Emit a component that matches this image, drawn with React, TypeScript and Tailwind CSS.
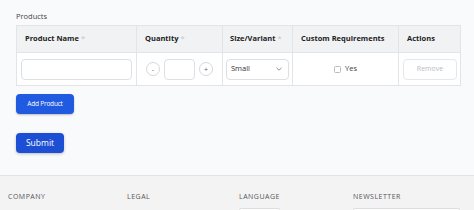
import React from "react";

export default function App() {
  const font = { fontFamily: '"Open Sans", "Noto Sans", sans-serif' };
  return (
    <div className="w-[474px] h-[210px] overflow-hidden bg-[#f9fafb]" style={font}>
      <div className="h-[176px] px-4 pt-[11px] border-b border-[#e3e3e3]">
        <div className="text-[7.5px] leading-[10px] text-[#444] mb-[4px]">Products</div>
        <table className="w-[444px] border-collapse text-[7.5px] table-fixed">
          <colgroup>
            <col className="w-[120px]" />
            <col className="w-[86px]" />
            <col className="w-[70px]" />
            <col className="w-[106px]" />
            <col className="w-[62px]" />
          </colgroup>
          <thead>
            <tr className="h-[27px] bg-[#f1f2f4]">
              <th className="border border-[#e2e4e8] text-left pl-2 font-bold text-[#222]">
                Product Name <span className="text-[#c4c4c4] font-normal">*</span>
              </th>
              <th className="border border-[#e2e4e8] text-left pl-2 font-bold text-[#222]">
                Quantity <span className="text-[#c4c4c4] font-normal">*</span>
              </th>
              <th className="border border-[#e2e4e8] text-left pl-[7px] font-bold text-[#222]">
                Size/Variant <span className="text-[#c4c4c4] font-normal">*</span>
              </th>
              <th className="border border-[#e2e4e8] text-left pl-2 font-bold text-[#222]">Custom Requirements</th>
              <th className="border border-[#e2e4e8] text-left pl-[8px] font-bold text-[#222]">Actions</th>
            </tr>
          </thead>
          <tbody>
            <tr className="h-[33px] bg-white">
              <td className="border border-[#e2e4e8] px-1">
                <div className="h-[21px] w-[111px] rounded-[4px] border border-[#dcdfe4] bg-white" />
              </td>
              <td className="border border-[#e2e4e8]">
                <div className="flex items-center pl-[9px] gap-[4px]">
                  <div className="w-[14px] h-[14px] rounded-full border border-[#d5d8dd] flex items-center justify-center text-[7px] text-[#666] leading-none">-</div>
                  <div className="w-[31px] h-[21px] rounded-[4px] border border-[#dcdfe4] bg-white" />
                  <div className="w-[14px] h-[14px] rounded-full border border-[#d5d8dd] flex items-center justify-center text-[7px] text-[#666] leading-none">+</div>
                </div>
              </td>
              <td className="border border-[#e2e4e8] px-[3px]">
                <div className="h-[21px] w-[63px] rounded-[4px] border border-[#dcdfe4] bg-white flex items-center justify-between pl-[4px] pr-[6px] text-[7.5px] text-[#333]">
                  <span>Small</span>
                  <svg width="6" height="4" viewBox="0 0 6 4"><path d="M0.5 0.8 L3 3.2 L5.5 0.8" fill="none" stroke="#777" strokeWidth="0.8" /></svg>
                </div>
              </td>
              <td className="border border-[#e2e4e8]">
                <div className="flex items-center justify-center gap-[4px] text-[7.5px] text-[#444]">
                  <div className="w-[7px] h-[7px] rounded-[1.5px] border border-[#bbb] bg-white" />
                  <span>Yes</span>
                </div>
              </td>
              <td className="border border-[#e2e4e8] px-1">
                <div className="h-[21px] w-[54px] rounded-[4px] border border-[#e5e7eb] bg-white flex items-center justify-center text-[7px] text-[#b8bcc2]">Remove</div>
              </td>
            </tr>
          </tbody>
        </table>
        <button className="mt-[8px] block h-[20px] w-[58px] rounded-[4px] bg-[#1f5ae0] text-white text-[6.5px] tracking-[-0.2px] shadow-[0_1px_2px_rgba(0,0,0,0.25)]">
          Add Product
        </button>
        <button className="mt-[19px] block h-[20px] w-[48px] rounded-[4px] bg-[#1c4fd4] text-white text-[8.5px] shadow-[0_1px_3px_rgba(0,0,0,0.25)]">
          Submit
        </button>
      </div>
      <div className="bg-[#f3f3f4] h-[34px] pt-[16px] grid grid-cols-[119px_112px_114px_1fr] pl-2 text-[7px] tracking-[0.5px] text-[#555]">
        <div>
          <div className="leading-[10px]">COMPANY</div>
        </div>
        <div>
          <div className="leading-[10px]">LEGAL</div>
        </div>
        <div>
          <div className="leading-[10px]">LANGUAGE</div>
          <div className="mt-[6px] h-[10px] w-[41px] border border-[#ddd] bg-white rounded-[2px]" />
        </div>
        <div>
          <div className="leading-[10px]">NEWSLETTER</div>
          <div className="mt-[6px] h-[10px] w-[107px] border border-[#ddd] bg-white rounded-[2px]" />
        </div>
      </div>
    </div>
  );
}
